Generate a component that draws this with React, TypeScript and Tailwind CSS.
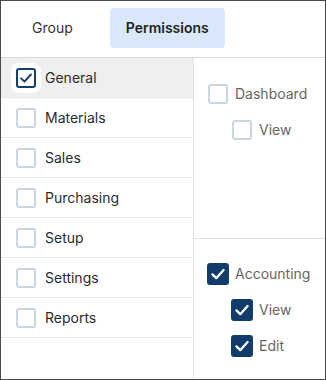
import React from "react";

function Check({ color, size }: { color: string; size: string }) {
  return (
    <svg viewBox="0 0 20 20" className={size} fill="none">
      <path d="M3 10.5 L7.8 15.2 L17 5" stroke={color} strokeWidth="2.8" strokeLinecap="round" strokeLinejoin="round" />
    </svg>
  );
}

function Box({ state }: { state: "off" | "on" | "focus" }) {
  if (state === "off") {
    return <span className="w-5 h-5 shrink-0 rounded-[3px] border-2 border-[#cbd6e3] bg-white" />;
  }
  if (state === "focus") {
    return (
      <span className="w-5 h-5 shrink-0 rounded-[3px] border-[2.5px] border-[#13406f] bg-white flex items-center justify-center shadow-[0_0_0_5px_white]">
        <Check color="#13406f" size="w-[14px] h-[14px]" />
      </span>
    );
  }
  return (
    <span className="w-[22px] h-[22px] -m-px shrink-0 rounded-[3px] bg-[#123c6b] flex items-center justify-center">
      <Check color="#ffffff" size="w-[16px] h-[16px]" />
    </span>
  );
}

const modules = ["Materials", "Sales", "Purchasing", "Setup", "Settings", "Reports"];

export default function App() {
  return (
    <div
      className="w-[326px] h-[380px] border border-[#4a4a4a] bg-white flex flex-col text-sm"
      style={{ fontFamily: "Inter, 'Noto Sans', sans-serif" }}
    >
      <div className="flex items-center pl-[15px] gap-[21px] pt-[7px] pb-[9px] border-b border-[#d9d9d9]">
        <div className="h-10 px-4 flex items-center text-[#333333]">Group</div>
        <div className="h-10 px-4 flex items-center rounded-[4px] bg-[#d9e9fb] font-semibold text-[#222222]">Permissions</div>
      </div>
      <div className="flex flex-1">
        <div className="w-[193px] border-r border-[#e3e3e3] flex flex-col">
          <div className="h-10 flex items-center pl-[15px] gap-[9px] bg-[#efefef] border-b border-[#e6e6e6] text-[#2b2b2b]">
            <Box state="focus" />
            <span>General</span>
          </div>
          {modules.map((m) => (
            <div key={m} className="h-10 flex items-center pl-[15px] gap-[9px] border-b border-[#e6e6e6] text-[#2b2b2b]">
              <Box state="off" />
              <span>{m}</span>
            </div>
          ))}
        </div>
        <div className="flex-1 flex flex-col text-[#666666]">
          <div className="h-[181px] border-b border-[#e3e3e3] pl-[14px] pt-[26px] flex flex-col gap-4">
            <div className="flex items-center gap-[7px]">
              <Box state="off" />
              <span>Dashboard</span>
            </div>
            <div className="flex items-center gap-[7px] pl-6">
              <Box state="off" />
              <span>View</span>
            </div>
          </div>
          <div className="pl-[14px] pt-[25px] flex flex-col gap-4">
            <div className="flex items-center gap-[7px]">
              <Box state="on" />
              <span>Accounting</span>
            </div>
            <div className="flex items-center gap-[7px] pl-6">
              <Box state="on" />
              <span>View</span>
            </div>
            <div className="flex items-center gap-[7px] pl-6">
              <Box state="on" />
              <span>Edit</span>
            </div>
          </div>
        </div>
      </div>
    </div>
  );
}
